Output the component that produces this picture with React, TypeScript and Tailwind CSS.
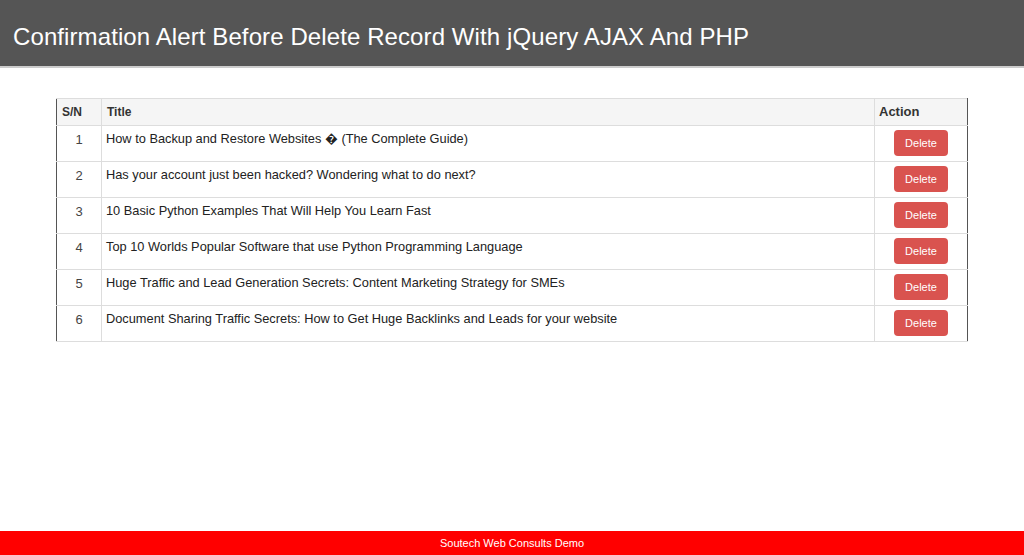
const posts = [
  'How to Backup and Restore Websites \uFFFD (The Complete Guide)',
  'Has your account just been hacked? Wondering what to do next?',
  '10 Basic Python Examples That Will Help You Learn Fast',
  'Top 10 Worlds Popular Software that use Python Programming Language',
  'Huge Traffic and Lead Generation Secrets: Content Marketing Strategy for SMEs',
  'Document Sharing Traffic Secrets: How to Get Huge Backlinks and Leads for your website',
]

export default function App() {
  return (
    <div className="flex flex-col h-[555px] bg-white font-['Liberation_Sans',Arial,sans-serif] text-[#333]">
      {/* Header */}
      <div className="h-[68px] bg-[#555555] border-b-2 border-[#cccccc] flex items-center px-[13px] pt-[8px] shrink-0">
        <h1 className="text-[24px] text-white leading-none tracking-[0.1px]">
          Confirmation Alert Before Delete Record With jQuery AJAX And PHP
        </h1>
      </div>

      {/* Table */}
      <div className="flex-1 pt-[30px] px-[56px]">
        <table className="w-[912px] border-collapse border border-[#555] border-t-[#dddddd]">
          <thead>
            <tr className="bg-[#f5f5f5] h-[27px]">
              <th className="w-[45px] border border-[#dddddd] border-l-[#555] text-left text-[12px] font-bold px-[5px] text-[#333]">S/N</th>
              <th className="border border-[#dddddd] text-left text-[12px] font-bold px-[5px] text-[#333]">Title</th>
              <th className="w-[93px] border border-[#dddddd] border-r-[#555] text-left text-[13px] font-bold px-[4px] text-[#333]">Action</th>
            </tr>
          </thead>
          <tbody>
            {posts.map((title, i) => (
              <tr key={i} className="h-[36px]">
                <td className="border border-[#dddddd] border-l-[#555] align-top text-center text-[13px] text-[#444] pt-[5px] leading-[18px]">{i + 1}</td>
                <td className="border border-[#dddddd] align-top text-[12.8px] text-[#222] px-[4px] pt-[4px] leading-[18px]">{title}</td>
                <td className="border border-[#dddddd] border-r-[#555] align-top text-center py-[4px]">
                  <button className="w-[54px] h-[26px] rounded-[4px] bg-[#d9534f] text-white text-[11px]">Delete</button>
                </td>
              </tr>
            ))}
          </tbody>
        </table>
      </div>

      {/* Footer */}
      <div className="h-[24px] bg-[#ff0000] flex items-center justify-center shrink-0">
        <span className="text-[11px] text-white">Soutech Web Consults Demo</span>
      </div>
    </div>
  )
}
